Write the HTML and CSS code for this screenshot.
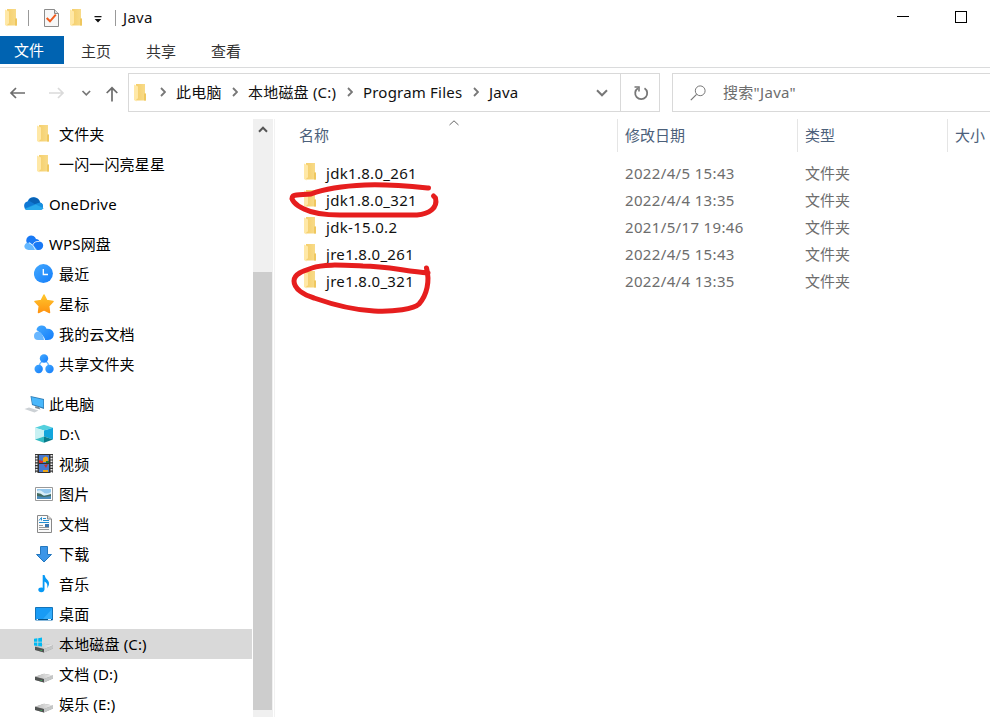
FILE: index.html
```html
<!DOCTYPE html>
<html lang="zh-CN">
<head>
    <meta charset="UTF-8">
    <title>Java</title>
    <link rel="stylesheet" href="styles.css">
</head>
<body>
    <!-- Shared icons -->
    <svg class="icon-defs" width="0" height="0">
        <defs>
            <linearGradient id="gFolder" x1="0" x2="1"><stop offset="0" stop-color="#f5cf6c"/><stop offset="1" stop-color="#f8dc8c"/></linearGradient>
            <linearGradient id="gBlue" x1="0" y1="0" x2="1" y2="1"><stop offset="0" stop-color="#43a9ff"/><stop offset="1" stop-color="#147dfa"/></linearGradient>
            <linearGradient id="gStar" x1="0" y1="0" x2="0" y2="1"><stop offset="0" stop-color="#ffc52b"/><stop offset="1" stop-color="#ff9411"/></linearGradient>
            <linearGradient id="gDrive" x1="0" x2="1"><stop offset="0" stop-color="#b9b9b9"/><stop offset="1" stop-color="#eee"/></linearGradient>
        </defs>
        <symbol id="folder" viewBox="0 0 12 18">
            <path d="M2 0H11V9.5L12 10V16.5H2Z" fill="url(#gFolder)"/>
            <path d="M10 9.5H12V16.5H10Z" fill="#efc75f"/>
            <path d="M0 .5L4 2.5V14.5L2.5 15V17.5L0 16Z" fill="#ffe8a6"/>
        </symbol>
        <symbol id="chevron" viewBox="0 0 6 10">
            <path d="M1 1L5 5L1 9" fill="none" stroke="#777" stroke-width="1.8"/>
        </symbol>
        <symbol id="drive" viewBox="0 0 20 20">
            <path d="M1 12.7L10 9.7L19 11.5V14.5L10 18.5L1 16Z" fill="#9a9a9a"/>
            <path d="M1 12.7L10 9.7L19 11.5L10 15Z" fill="url(#gDrive)"/>
            <path d="M1 12.7L10 15V18.5L1 16Z" fill="#505352"/>
            <path d="M10 15L19 11.5V14.5L10 18.5Z" fill="#c5c7c7"/>
            <path d="M6.5 16H8V17H6.5Z" fill="#3fa25b"/>
        </symbol>
    </svg>

    <!-- Title bar -->
    <div class="titlebar">
        <svg class="folder"><use href="#folder"/></svg>
        <span class="divider"></span>
        <svg class="check-doc" viewBox="0 0 15 18">
            <path d="M.5 .5H10.5L14.5 4.5V17.5H.5Z" fill="#f7f7f7" stroke="#8b8b8b"/>
            <path d="M10.5 .5V4.5H14.5" fill="#ddd" stroke="#8b8b8b"/>
            <path d="M2.7 9L6 12.3L11.8 5.7" fill="none" stroke="#f05a1c" stroke-width="2"/>
        </svg>
        <svg class="folder"><use href="#folder"/></svg>
        <svg class="customize" viewBox="0 0 8 7"><path d="M.5 0H7.5V1.2H.5ZM.7 3H7.3L4 6.5Z" fill="#111"/></svg>
        <span class="divider"></span>
        <span class="title">Java</span>
        <div class="window-buttons">
            <svg viewBox="0 0 72 14"><path d="M0 5.5H12" stroke="#000"/><rect x="58.5" y=".5" width="11" height="11" fill="none" stroke="#000"/></svg>
        </div>
    </div>

    <!-- Ribbon tabs -->
    <div class="ribbon">
        <div class="tab active">文件</div>
        <div class="tab">主页</div>
        <div class="tab">共享</div>
        <div class="tab">查看</div>
    </div>

    <!-- Navigation and address -->
    <div class="navbar">
        <svg class="nav-arrows" viewBox="0 0 128 38" fill="none" stroke-width="1.7">
            <path d="M25 20H11M16 15L11 20L16 25" stroke="#6d6d6d"/>
            <path d="M49 20H63M58 15L63 20L58 25" stroke="#dadada"/>
            <path d="M82.500 18L86.300 21.800L90.100 18" stroke="#777"/>
            <path d="M112 28.500V15M106.700 20L112 14.800L117.300 20" stroke="#6d6d6d"/>
        </svg>
        <div class="address">
            <svg class="folder"><use href="#folder"/></svg>
            <svg class="sep"><use href="#chevron"/></svg>
            <span class="crumb pc">此电脑</span>
            <svg class="sep"><use href="#chevron"/></svg>
            <span class="crumb disk">本地磁盘 (C:)</span>
            <svg class="sep"><use href="#chevron"/></svg>
            <span class="crumb programs">Program Files</span>
            <svg class="sep"><use href="#chevron"/></svg>
            <span class="crumb">Java</span>
            <svg class="history" viewBox="0 0 12 8"><path d="M1 1.300L6 6.300L11 1.300" fill="none" stroke="#777" stroke-width="2"/></svg>
            <div class="refresh">
                <svg viewBox="0 0 16 16"><path d="M11.500 3.200A6 6 0 1 1 4.900 3.200" fill="none" stroke="#777" stroke-width="1.800"/><path d="M1.500 2H6V6.500" fill="none" stroke="#777" stroke-width="1.600"/></svg>
            </div>
        </div>
        <div class="search">
            <svg viewBox="0 0 16 16" fill="none" stroke="#777"><circle cx="10.200" cy="5.800" r="4.900"/><path d="M6.600 9.300L.8 15.200" stroke-width="1.200"/></svg>
            <span>搜索"Java"</span>
        </div>
    </div>

    <div class="content">
        <!-- Navigation tree -->
        <div class="sidebar">
            <div class="item"><svg class="icon" viewBox="0 0 20 20"><use href="#folder" x="3" y="1" width="12" height="18"/></svg>文件夹</div>
            <div class="item"><svg class="icon" viewBox="0 0 20 20"><use href="#folder" x="3" y="1" width="12" height="18"/></svg>一闪一闪亮星星</div>
            <div class="item root">
                <svg class="icon" viewBox="0 0 20 20">
                    <path d="M3.500 16A4.300 4.300 0 0 1 3.500 7.600A6.500 6.500 0 0 1 16 8.500A3.900 3.900 0 0 1 16.200 16Z" fill="#0f78d4"/>
                    <path d="M5 5.800A6.400 6.400 0 0 1 16 8.500L11.500 10.500L5.500 7Z" fill="#0962b5"/>
                    <path d="M.5 14.500L12 9.800L16 8.500A3.900 3.900 0 0 1 16.200 16H4.500Q1.500 16 .5 14.500Z" fill="#1790df"/>
                    <path d="M1 15L11.800 10.500L19.700 14.200Q18.500 16 16.200 16H4.500Q2 16 1 15Z" fill="#29a9ec"/>
                </svg>OneDrive
            </div>
            <div class="item root">
                <svg class="icon" viewBox="0 0 20 20">
                    <path d="M2.500 8.200A5 5 0 0 1 12 5Q15 5 15.500 7.500Q19 8 19.200 11.500Q18.800 15.800 14.500 16H9Z" fill="#1979f5"/>
                    <path d="M.3 12Q1.500 8 6.500 8.700L13.500 16H4.500Q.5 15.500 .3 12Z" fill="#65b8ff"/>
                    <path d="M5 8.700Q10 10.500 11.500 16M15.500 7.500Q10 7 9 10.800" stroke="#fff" stroke-width=".8" fill="none"/>
                </svg>WPS网盘
            </div>
            <div class="item">
                <svg class="icon" viewBox="0 0 20 20"><circle cx="9.400" cy="9.600" r="9.500" fill="url(#gBlue)"/><path d="M9.300 5V10.500H14" fill="none" stroke="#fff" stroke-width="1.300"/></svg>最近
            </div>
            <div class="item">
                <svg class="icon" viewBox="0 0 20 20"><path d="M10 1L12.800 6.500L19 7.600L14.700 12.100L15.500 18.500L10 15.900L4.500 18.500L5.300 12.100L1 7.600L7.200 6.500Z" fill="url(#gStar)" stroke="url(#gStar)" stroke-width="1.500" stroke-linejoin="round"/></svg>星标
            </div>
            <div class="item">
                <svg class="icon" viewBox="0 0 20 20">
                    <path d="M2.500 6A5.200 5.200 0 0 1 12.500 4.700Q18.500 4.200 19.800 9.500Q20 15.800 14 16H11Q10 11 2.500 6Z" fill="url(#gBlue)"/>
                    <path d="M0 12Q0 8 4 7.400Q8.700 8 10 16H4Q0 15.800 0 12Z" fill="#69b7ff"/>
                </svg>我的云文档
            </div>
            <div class="item">
                <svg class="icon" viewBox="0 0 20 20"><path d="M4.500 15L6 9.500L10 5L14 9.500L15.500 15" fill="none" stroke="#69b7ff" stroke-width="1.300"/><circle cx="10" cy="4.500" r="4.200" fill="url(#gBlue)"/><circle cx="4.700" cy="15" r="4.200" fill="url(#gBlue)"/><circle cx="15.500" cy="15" r="4.200" fill="url(#gBlue)"/></svg>共享文件夹
            </div>
            <div class="item root">
                <svg class="icon" viewBox="0 0 20 20">
                    <path d="M6.500 2L20 5V15L8 11Z" fill="#2f7bb3"/>
                    <path d="M7.300 3L19.300 5.700V13.600L8.600 10.300Z" fill="#49b7fb"/>
                    <path d="M11.500 12L15 13L16.500 15.500L11 14Z" fill="#7d8c96"/>
                    <path d="M.5 15L5 13.500L14.500 16.500L10.500 18.500Z" fill="#ccd1d5"/>
                </svg>此电脑
            </div>
            <div class="item">
                <svg class="icon" viewBox="0 0 20 20"><path d="M10 .8L19 3.800L10 6.500L1 3.800Z" fill="#54d0dd"/><path d="M1 3.800L10 6.500V12.500L1 15.500Z" fill="#c8f1f3"/><path d="M10 6.500L19 3.800V15.500L10 12.500Z" fill="#12a6dc"/><path d="M1 15.500L10 12.500V18.700Z" fill="#35bdc4"/><path d="M10 12.500L19 15.500L10 18.700Z" fill="#087c8b"/></svg>D:\
            </div>
            <div class="item">
                <svg class="icon" viewBox="0 0 20 20">
                    <path d="M1 0H19V19H1Z" fill="#333"/><path d="M5 1H15V9H5ZM5 10H15V18H5Z" fill="#4779cf"/>
                    <path d="M2.500 1V19M17.500 1V19" stroke="#eee" stroke-width="2" stroke-dasharray="1.600 1.200"/>
                    <path d="M9 4Q12 1 14 4V8H9ZM9 16H14V18H9Z" fill="#eda619"/><path d="M5 6L9 7V9H5ZM10 11L14 10L12 14Z" fill="#d3312b"/><path d="M12 7H15V9H12Z" fill="#247635"/>
                </svg>视频
            </div>
            <div class="item">
                <svg class="icon" viewBox="0 0 20 20"><path d="M1.500 3.500H18.500V16.500H1.500Z" fill="#fff" stroke="#999"/><path d="M3 5H17V15H3Z" fill="#93c7ed"/><path d="M3 7Q6 5 9 8T17 8V11H3Z" fill="#d9edf7"/><path d="M3 9Q7 9 10 12L17 10V13H3Z" fill="#426b61"/><path d="M3 12L10 13L17 12V15H3Z" fill="#4b8cbb"/></svg>图片
            </div>
            <div class="item">
                <svg class="icon" viewBox="0 0 20 20"><path d="M3.500 1.500H13.500L17.500 5V18.500H3.500Z" fill="#fafafa" stroke="#888"/><path d="M13.500 1.500V5H17.500" fill="#ddd" stroke="#888"/><path d="M5 6.500L7.500 3.500V6.500M9 4.500H12M9 6.500H15M5 8.500H15" stroke="#238cce" fill="none"/><path d="M5 11.500H9M5 13.500H15M5 15.500H15" stroke="#999"/><path d="M11 10H15V13H11Z" fill="#3b76ae"/></svg>文档
            </div>
            <div class="item">
                <svg class="icon" viewBox="0 0 20 20"><path d="M6.500 2.500H13.500V10.500H17.500L10 18L2.500 10.500H6.500Z" fill="#3c96e8" stroke="#2478bf"/></svg>下载
            </div>
            <div class="item">
                <svg class="icon" viewBox="0 0 20 20"><ellipse cx="7.300" cy="15.800" rx="3" ry="2.400" fill="#0799f5"/><path d="M8.700 15.500V1H10.500Q11 4 14 6.500Q16.500 10 13 14.500Q14.500 9.500 10.500 7.500V15.500Z" fill="#0799f5"/></svg>音乐
            </div>
            <div class="item">
                <svg class="icon" viewBox="0 0 20 20"><path d="M1.500 3.500H18.500V16H1.500Z" fill="#199bf5" stroke="#1474b9"/><path d="M9 15L18 5V15Z" fill="#34adfb"/><path d="M2 15.500H18" stroke="#075287"/><path d="M2.500 15.500H4M14 15.500H17" stroke="#e6f6ff"/></svg>桌面
            </div>
            <div class="item selected">
                <svg class="icon" viewBox="0 0 20 20"><use href="#drive"/><path d="M0 4.800L3.400 4.300V7.800H0ZM4.200 4.200L8 3.500V7.800H4.200ZM0 8.600H3.400V11.900L0 11.500ZM4.200 8.600H8V12.500L4.200 12Z" fill="#00b9f2"/></svg>本地磁盘 (C:)
            </div>
            <div class="item"><svg class="icon" viewBox="0 0 20 20"><use href="#drive"/></svg>文档 (D:)</div>
            <div class="item"><svg class="icon" viewBox="0 0 20 20"><use href="#drive"/></svg>娱乐 (E:)</div>
        </div>
        <div class="scrollbar">
            <svg viewBox="0 0 10 7"><path d="M1 5.700L5 1.700L9 5.700" fill="none" stroke="#555" stroke-width="2"/></svg>
            <div class="thumb"></div>
        </div>

        <!-- File list -->
        <div class="files">
            <div class="row header">
                <span class="name">名称</span>
                <span>修改日期</span>
                <span>类型</span>
                <span>大小</span>
                <svg class="sort" viewBox="0 0 10 6"><path d="M.5 5L5 .8L9.500 5" fill="none" stroke="#666"/></svg>
            </div>
            <div class="row"><span class="name"><svg class="folder"><use href="#folder"/></svg>jdk1.8.0_261</span><span class="date">2022/4/5 15:43</span><span>文件夹</span></div>
            <div class="row"><span class="name"><svg class="folder"><use href="#folder"/></svg>jdk1.8.0_321</span><span class="date">2022/4/4 13:35</span><span>文件夹</span></div>
            <div class="row"><span class="name"><svg class="folder"><use href="#folder"/></svg>jdk-15.0.2</span><span class="date">2021/5/17 19:46</span><span>文件夹</span></div>
            <div class="row"><span class="name"><svg class="folder"><use href="#folder"/></svg>jre1.8.0_261</span><span class="date">2022/4/5 15:43</span><span>文件夹</span></div>
            <div class="row"><span class="name"><svg class="folder"><use href="#folder"/></svg>jre1.8.0_321</span><span class="date">2022/4/4 13:35</span><span>文件夹</span></div>
        </div>
    </div>

    <!-- Red pen marks around the 321 folders -->
    <svg class="marks" viewBox="0 0 200 165">
        <path d="M148.500 33C128 31 108 29 85 30C62 31 44 34 31 39C24 40 17 39 13 41C10 44 15 50 24 54C34 59 45 60 60 60H137C149 59 158 53 155.500 43L153.500 41"/>
        <path d="M148 118C125 116 105 111 83 111C60 110 43 109 32 113C23 116 14 119 14 126C14 134 24 140 34 143C54 150 72 155 94 156C114 157 134 154 139 149C147 140 150 126 146.500 113"/>
    </svg>
</body>
</html>
```
FILE: styles.css
```css
* {
    box-sizing: border-box;
}
body {
    margin: 0;
    width: 990px;
    height: 717px;
    overflow: hidden;
    background-color: #fff;
    color: #111;
    font-family: "Noto Sans", "Noto Sans CJK SC", sans-serif;
    font-size: 15px;
    line-height: 20px;
    white-space: nowrap;
}
svg {
    flex: none;
    display: block;
}
.icon-defs {
    position: absolute;
}
.folder {
    width: 12px;
    height: 18px;
}
.titlebar {
    display: flex;
    align-items: center;
    height: 36px;
    padding-left: 5px;
}
.divider {
    width: 1px;
    height: 16px;
    margin-left: 11px;
    background-color: #999;
}
.check-doc {
    width: 15px;
    height: 18px;
    margin: 0 11px 0 15px;
}
.customize {
    width: 8px;
    height: 7px;
    margin-left: 12px;
    margin-top: 2px;
}
.customize + .divider {
    margin-left: 13px;
}
.title {
    margin-left: 7px;
    margin-bottom: 2px;
    letter-spacing: 0.3px;
}
.window-buttons {
    margin-left: auto;
    padding-right: 21px;
}
.window-buttons svg {
    width: 72px;
    height: 14px;
}
.ribbon {
    display: flex;
    height: 32px;
    border-bottom: 1px solid #dadbdc;
}
.tab {
    width: 65px;
    height: 28px;
    padding-left: 17px;
    line-height: 30px;
    color: #333;
}
.tab.active {
    width: 64px;
    padding-left: 14px;
    background-color: #0063b1;
    color: #fff;
    line-height: 28px;
}
.navbar {
    display: flex;
    height: 51px;
    padding-top: 5px;
}
.nav-arrows {
    width: 128px;
    height: 38px;
}
.address {
    display: flex;
    align-items: center;
    width: 532px;
    height: 39px;
    padding-left: 5px;
    border: 1px solid #d9d9d9;
}
.sep {
    width: 6px;
    height: 10px;
    margin: 0 10px 2px 14px;
}
.crumb {
    margin-bottom: 2px;
    letter-spacing: 0.2px;
}
.crumb + .sep {
    margin-left: 0;
}
.crumb.pc {
    width: 56px;
}
.crumb.disk {
    width: 99px;
}
.crumb.programs {
    width: 110px;
}
.history {
    width: 12px;
    height: 8px;
    margin-left: auto;
    margin-right: 12px;
}
.refresh {
    display: flex;
    align-items: center;
    justify-content: center;
    width: 39px;
    height: 37px;
    padding-left: 2px;
    border-left: 1px solid #d9d9d9;
}
.refresh svg {
    width: 16px;
    height: 16px;
}
.search {
    display: flex;
    align-items: center;
    flex: 1;
    height: 39px;
    margin-left: 12px;
    padding-left: 17px;
    border: 1px solid #d9d9d9;
    border-right: none;
    color: #6d6d6d;
    letter-spacing: 0.3px;
}
.search svg {
    width: 16px;
    height: 16px;
    margin-right: 17px;
}
.search span {
    margin-bottom: 2px;
}
.content {
    display: flex;
    height: 598px;
}
.sidebar {
    width: 252px;
    color: #000;
}
.item {
    display: flex;
    align-items: center;
    height: 30px;
    padding-left: 34px;
    letter-spacing: 0.15px;
}
.item.root {
    margin-top: 10px;
    padding-left: 24px;
}
.icon {
    width: 20px;
    height: 20px;
    margin-right: 5px;
}
.item.selected {
    background-color: #d9d9d9;
}
.scrollbar {
    width: 20px;
    height: 598px;
    margin-left: 1px;
    padding-top: 7px;
    background-color: #f0f0f0;
}
.scrollbar svg {
    width: 10px;
    height: 7px;
    margin-left: 5px;
}
.thumb {
    width: 19px;
    height: 438px;
    margin-top: 139px;
    background-color: #cdcdcd;
}
.files {
    flex: 1;
    margin-left: 1px;
    border-left: 1px solid #f2f2f2;
}
.row {
    display: grid;
    grid-template-columns: 342px 180px 150px 43px;
    align-items: center;
    height: 27px;
    color: #6d6d6d;
}
.row span {
    padding-left: 8px;
}
.row .name {
    display: flex;
    align-items: center;
    padding-left: 29px;
    color: #111;
    letter-spacing: 0.3px;
}
.row .date {
    letter-spacing: 0.35px;
}
.row .folder {
    margin-right: 10px;
    margin-bottom: 1px;
}
.row.header {
    position: relative;
    height: 33px;
    margin-bottom: 7px;
    color: #4c607a;
}
.row.header span {
    height: 33px;
    line-height: 33px;
    padding-left: 7px;
    border-left: 1px solid #e5e5e5;
}
.row.header .name {
    padding-left: 24px;
    border-left: none;
    color: #4c607a;
    letter-spacing: 0;
}
.sort {
    position: absolute;
    left: 174px;
    top: 1px;
    width: 10px;
    height: 6px;
}
.marks {
    position: absolute;
    left: 280px;
    top: 155px;
    width: 200px;
    height: 165px;
    fill: none;
    stroke: #e61e1e;
    stroke-width: 5;
    stroke-linecap: round;
    stroke-linejoin: round;
}
```
